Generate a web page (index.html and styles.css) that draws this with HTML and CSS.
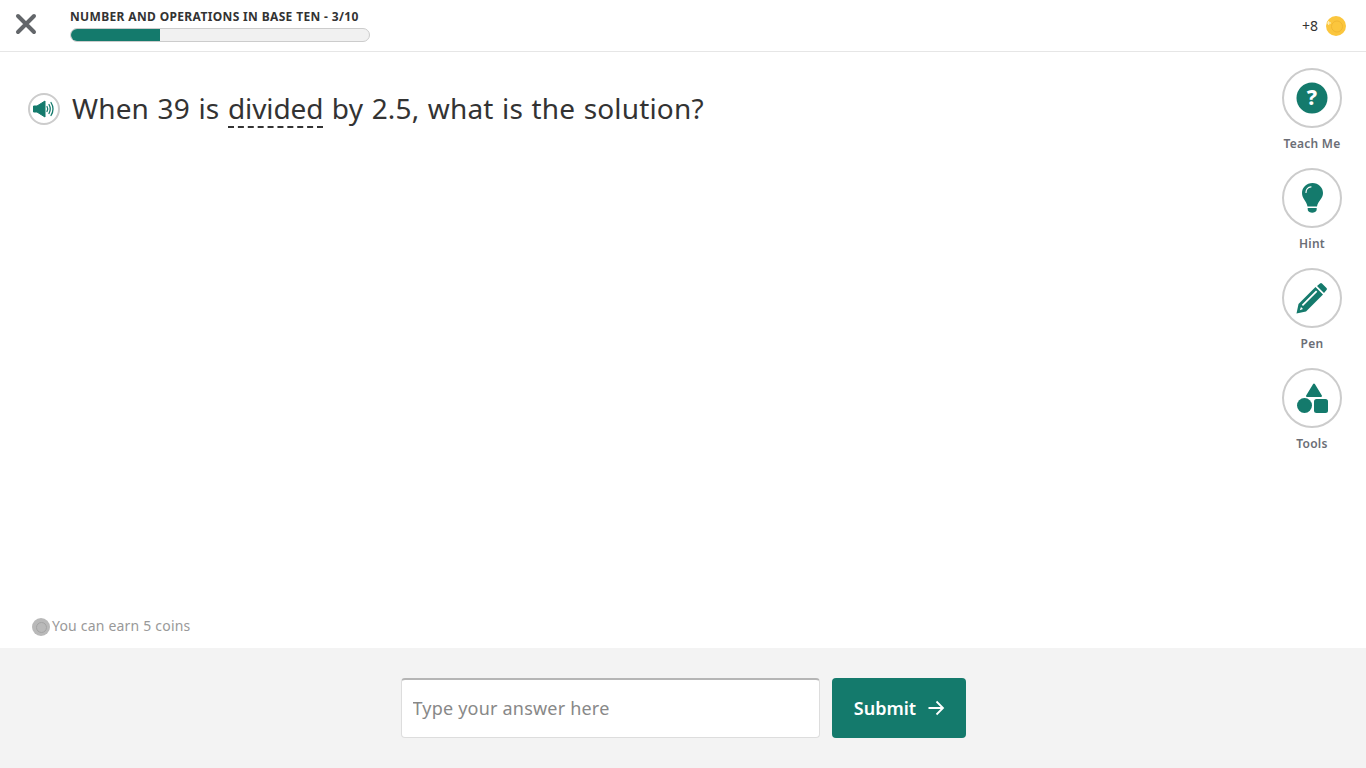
FILE: index.html
```html
<!DOCTYPE html>
<html lang="en">
<head>
  <meta charset="UTF-8">
  <title>Practice</title>
  <link rel="stylesheet" href="styles.css">
</head>
<body>
  <header class="topbar">
    <svg class="close-icon" viewBox="0 0 22 22"><path d="M3 3 L19 19 M19 3 L3 19" stroke="#63666a" stroke-width="4" stroke-linecap="round" fill="none"/></svg>
    <div class="progress-wrap">
      <div class="progress-title">NUMBER AND OPERATIONS IN BASE TEN - 3/10</div>
      <div class="progress-track"><div class="progress-fill"></div></div>
    </div>
    <div class="coins">
      <span>+8</span>
      <svg class="coin" viewBox="0 0 20 20">
        <circle cx="10" cy="10" r="10" fill="#fbc63d"/>
        <circle cx="11" cy="10.500" r="5.500" fill="none" stroke="#f1b733" stroke-width="1"/>
        <path d="M0.500 7 H5 M2.700 5 V9" stroke="#fff3c4" stroke-width="1"/>
      </svg>
    </div>
  </header>

  <main class="content">
    <div class="question-area">
      <div class="question">
        <span class="audio-btn">
          <svg viewBox="0 0 32 32" width="32" height="32">
            <circle cx="16" cy="16" r="15" fill="#fff" stroke="#ccc" stroke-width="2"/>
            <path d="M5.500 13 H9 L17 8 V24 L9 19 H5.500 Z" fill="#147a6c" stroke="#147a6c" stroke-linejoin="round"/>
            <path d="M19 13.500 Q20.500 16 19 18.500 M21 11.500 Q23.500 16 21 20.500 M23 9.500 Q27 16 23 22.500" stroke="#147a6c" stroke-width="1.300" fill="none" stroke-linecap="round"/>
          </svg>
        </span>
        <h1>When 39 is <span class="term">divided</span> by 2.5, what is the solution?</h1>
      </div>
      <div class="earn">
        <svg class="coin-grey" viewBox="0 0 18 18">
          <circle cx="9" cy="9" r="9" fill="#b9b9b9"/>
          <circle cx="9.500" cy="9.500" r="5" fill="none" stroke="#a4a4a4" stroke-width="1"/>
        </svg>
        <span>You can earn 5 coins</span>
      </div>
    </div>

    <aside class="tools">
      <div class="tool">
        <div class="tool-circle">
          <svg viewBox="0 0 32 32" width="32" height="32">
            <circle cx="16" cy="16" r="15.500" fill="#147a6c"/>
            <text x="16" y="23" class="q-mark" text-anchor="middle">?</text>
          </svg>
        </div>
        <span>Teach Me</span>
      </div>
      <div class="tool">
        <div class="tool-circle">
          <svg viewBox="0 0 32 32" width="32" height="32">
            <path d="M16.500 1 C10.500 1 6 5.500 6 11 C6 16.500 10.500 19 11.500 24.500 H21 C22 19 27 16.500 27 11 C27 5.500 22.500 1 16.500 1 Z" fill="#147a6c"/>
            <path d="M10 10.500 C10 7.500 12 5 15 4.800" stroke="#fff" stroke-width="1.200" fill="none" stroke-linecap="round"/>
            <path d="M11.700 26 H20.700 C20.700 28 20.700 29 19 30 Q16.200 31.500 13.400 30 C11.700 29 11.700 28 11.700 26 Z" fill="#147a6c"/>
          </svg>
        </div>
        <span>Hint</span>
      </div>
      <div class="tool">
        <div class="tool-circle">
          <svg viewBox="0 0 32 32" width="32" height="32">
            <path d="M24 1.500 Q25 0.500 26 1.500 L30.500 6 Q31.500 7 30.500 8 L28 11 L21 4 Z" fill="#147a6c"/>
            <path fill-rule="evenodd" d="M19.500 5 L27 12.500 L10 29.500 L0.500 31.500 L2.500 22 Z M20 8.500 L5.800 22.700 L7 24 L21.300 9.800 Z M5 25 L3.800 28.200 L7 27 Z" fill="#147a6c"/>
          </svg>
        </div>
        <span>Pen</span>
      </div>
      <div class="tool">
        <div class="tool-circle">
          <svg viewBox="0 0 32 32" width="32" height="32">
            <path d="M18 2.500 L25 14 H11 Z" fill="#147a6c" stroke="#147a6c" stroke-width="2" stroke-linejoin="round"/>
            <circle cx="8.500" cy="23.500" r="7.500" fill="#147a6c"/>
            <rect x="18" y="17" width="14" height="14" rx="2.500" fill="#147a6c"/>
          </svg>
        </div>
        <span>Tools</span>
      </div>
    </aside>
  </main>

  <footer class="answer-bar">
    <input class="answer-input" type="text" placeholder="Type your answer here">
    <button class="submit-btn">Submit
      <svg viewBox="0 0 18 16" width="18" height="16"><path d="M1.500 8 H16 M9.500 1.500 L16 8 L9.500 14.500" stroke="#fff" stroke-width="1.800" fill="none"/></svg>
    </button>
  </footer>
</body>
</html>
```

FILE: styles.css
```css
* {
  box-sizing: border-box;
}
html, body {
  height: 100%;
}
body {
  margin: 0;
  display: flex;
  flex-direction: column;
  height: 768px;
  overflow: hidden;
  background: #fff;
  font-family: "Noto Sans", "Open Sans", sans-serif;
  color: #333;
}
.topbar {
  height: 52px;
  flex: none;
  display: flex;
  align-items: flex-start;
  border-bottom: 1px solid #e6e6e6;
  padding-left: 15px;
  padding-right: 20px;
}
.close-icon {
  width: 22px;
  height: 22px;
  margin-top: 13px;
}
.progress-wrap {
  margin-left: 33px;
  width: 300px;
}
.progress-title {
  font-size: 12px;
  font-weight: 700;
  line-height: 16px;
  letter-spacing: 0.35px;
  margin-top: 9px;
  white-space: nowrap;
}
.progress-track {
  margin-top: 3px;
  height: 14px;
  background: #f1f1f1;
  border: 1px solid #ccc;
  border-radius: 7px;
  overflow: hidden;
}
.progress-fill {
  width: 30%;
  height: 100%;
  background: #147a6c;
}
.coins {
  margin-left: auto;
  display: flex;
  align-items: center;
  gap: 8px;
  font-size: 14px;
  margin-top: 16px;
  height: 20px;
}
.coins span {
  margin-bottom: 2px;
}
.coin {
  width: 20px;
  height: 20px;
}
.content {
  flex: 1;
  display: flex;
  min-height: 0;
}
.question-area {
  flex: 1;
  display: flex;
  flex-direction: column;
  justify-content: space-between;
  padding: 39px 0 12px 28px;
}
.question {
  display: flex;
  align-items: flex-start;
  gap: 12px;
}
.audio-btn {
  display: flex;
  width: 32px;
  height: 32px;
  margin-top: 2px;
}
.question h1 {
  margin: 0;
  font-size: 28px;
  font-weight: 400;
  line-height: 34px;
  letter-spacing: 0.15px;
  word-spacing: 1.1px;
}
.term {
  display: inline-block;
  padding-bottom: 1px;
  letter-spacing: -0.1px;
  border-bottom: 2px dashed #333;
}
.earn {
  display: flex;
  align-items: flex-end;
  gap: 2px;
  margin-left: 4px;
  font-size: 14px;
  letter-spacing: 0.2px;
  line-height: 18px;
  color: #999;
}
.earn span {
  margin-bottom: 1px;
}
.coin-grey {
  width: 18px;
  height: 18px;
}
.tools {
  width: 108px;
  flex: none;
  display: flex;
  flex-direction: column;
  align-items: center;
  padding-top: 16px;
  gap: 14px;
}
.tool {
  display: flex;
  flex-direction: column;
  align-items: center;
  gap: 7px;
  height: 86px;
  font-size: 12px;
  font-weight: 600;
  letter-spacing: 0.25px;
  line-height: 18px;
  color: #6b6e76;
}
.tool-circle {
  width: 60px;
  height: 60px;
  border: 2px solid #ccc;
  border-radius: 50%;
  display: flex;
  align-items: center;
  justify-content: center;
  flex: none;
}
.q-mark {
  font-family: "Noto Sans", sans-serif;
  font-size: 21px;
  font-weight: 800;
  fill: #fff;
}
.answer-bar {
  height: 120px;
  flex: none;
  background: #f3f3f3;
  display: flex;
  justify-content: center;
  align-items: center;
  gap: 12px;
}
.answer-input {
  width: 419px;
  height: 60px;
  border: 1px solid #ddd;
  border-top: 2px solid #b5b5b5;
  border-radius: 4px;
  padding: 0 11px 2px;
  font-family: inherit;
  font-size: 18px;
  letter-spacing: 0.2px;
  background: #fff;
}
.answer-input::placeholder {
  color: #888;
  opacity: 1;
}
.submit-btn {
  width: 134px;
  height: 60px;
  padding: 0 0 0 2px;
  background: #147a6c;
  border: none;
  border-radius: 4px;
  color: #fff;
  font-family: inherit;
  font-size: 18px;
  font-weight: 600;
  display: flex;
  align-items: center;
  justify-content: center;
  gap: 11px;
}
```
